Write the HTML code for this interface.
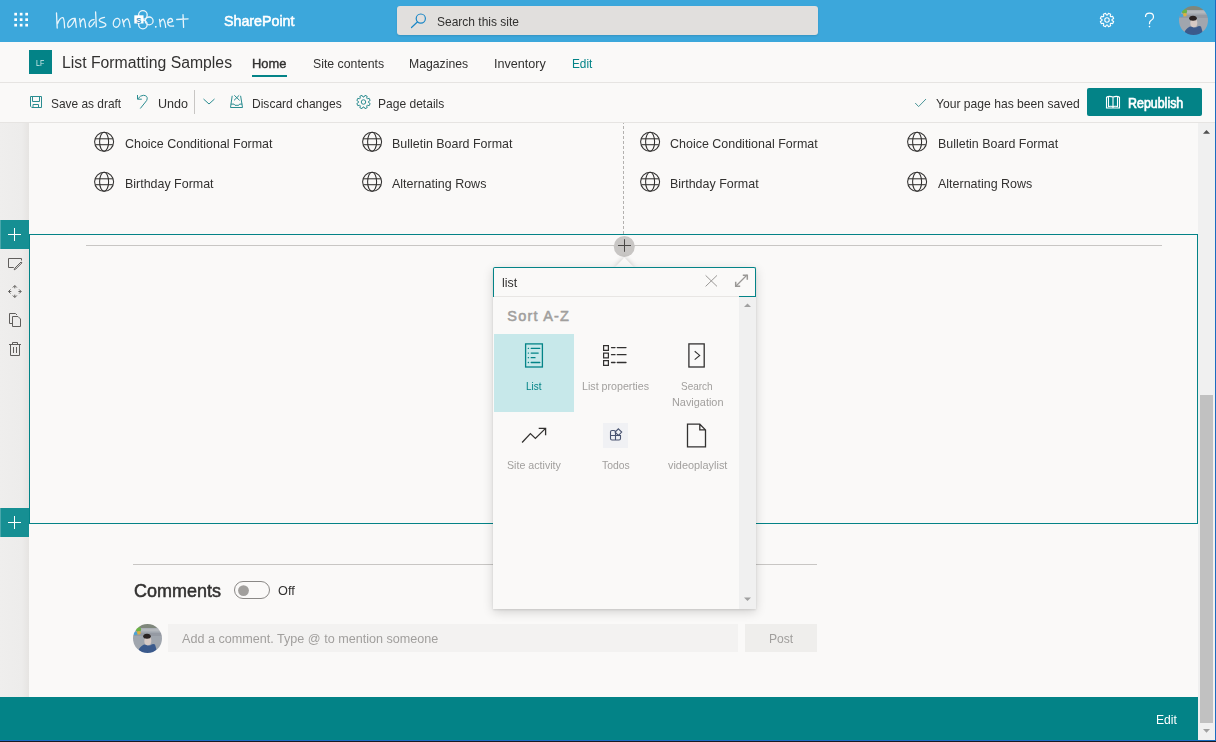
<!DOCTYPE html>
<html><head><meta charset="utf-8"><title>SharePoint</title>
<style>
html,body{margin:0;padding:0;width:1216px;height:742px;overflow:hidden;background:#faf9f8;}
.r{position:absolute;box-sizing:content-box;}
.t{position:absolute;white-space:nowrap;font-family:"Liberation Sans",sans-serif;transform-origin:0 0;}
svg{overflow:visible}
</style></head><body>
<div class="r" style="left:0;top:0;width:1216px;height:42px;background:#3ca7db"></div>
<svg class="r" style="left:0;top:0" width="40" height="42"><rect x="14.3" y="12.8" width="2.7" height="2.7" fill="#fff"/><rect x="14.3" y="18.3" width="2.7" height="2.7" fill="#fff"/><rect x="14.3" y="23.8" width="2.7" height="2.7" fill="#fff"/><rect x="19.8" y="12.8" width="2.7" height="2.7" fill="#fff"/><rect x="19.8" y="18.3" width="2.7" height="2.7" fill="#fff"/><rect x="19.8" y="23.8" width="2.7" height="2.7" fill="#fff"/><rect x="25.3" y="12.8" width="2.7" height="2.7" fill="#fff"/><rect x="25.3" y="18.3" width="2.7" height="2.7" fill="#fff"/><rect x="25.3" y="23.8" width="2.7" height="2.7" fill="#fff"/></svg>
<svg class="r" style="left:0;top:0" width="200" height="42"><g fill="none" stroke="#eaf5fb" stroke-width="1.3" stroke-linecap="round" stroke-linejoin="round"><path d="M56.5 13 L57.2 28 M57.5 23.7 Q60 17 63 17.6 Q64.3 19 64.6 27.8"/><path d="M75.2 18.4 Q70 18 67.8 23.5 Q67.5 27.5 69.2 27.2 Q72.5 25.8 75.2 18.4 L76.3 27.3"/><path d="M79.7 18.7 L80.6 26.6 M80.6 22.3 Q82 18.5 83.7 18.8 Q85 20 85.6 27.5"/><path d="M94 19.6 Q90 19.8 89 23.7 Q89 27.3 90.5 26.8 Q93 25.5 94.5 22 M95.6 12 L96.3 26.8"/><path d="M104.5 17.3 Q99.5 18 99.2 20.2 Q99.5 21.8 104 22.8 Q106.5 24 105.6 25.8 Q103.5 27.8 99.7 27.3"/><ellipse cx="116.6" cy="22.8" rx="3.2" ry="4.5" transform="rotate(15 116.6 22.8)"/><path d="M122.5 19.5 L124.2 26.7 M123.5 22.9 Q125.5 18.6 127.7 18.8 Q129.5 21 130.1 27.4"/><circle cx="142.9" cy="14.9" r="4.3"/><circle cx="149.2" cy="20.9" r="3.9"/><circle cx="142.9" cy="24.5" r="4.3"/><path d="M159.5 19.5 L160.5 26.7 M160.3 22 Q162 18.8 163.3 19.1 Q165 21 165.7 27.4"/><path d="M168.1 22.6 Q171 22.3 172.6 21.3 Q172.5 18.6 170.5 18.4 Q167.5 19 167.7 23 Q168 27 173.6 26"/><path d="M183 14.6 L183.6 27.4 M176.7 19.5 L188.1 18.8"/></g><circle cx="155.8" cy="26.8" r="0.9" fill="#fff"/><rect x="134.3" y="15.3" width="9.2" height="8.2" fill="#fff"/><text x="136.2" y="22.6" font-family="Liberation Sans" font-size="7.5" font-weight="700" fill="#3a8fc2">S</text></svg>
<span class="t" style="left:224.00px;top:14.00px;font-size:14.5px;line-height:14.5px;color:#fff;transform:scaleX(0.9822);-webkit-text-stroke:0.55px #fff;">SharePoint</span>
<div class="r" style="left:397px;top:6px;width:421px;height:29px;background:#e1dfdd;border-radius:3px;box-shadow:0 1px 2px rgba(0,0,0,.12)"></div>
<svg class="r" style="left:400px;top:5px" width="40" height="30"><circle cx="20.8" cy="13.6" r="4.6" fill="none" stroke="#1b87c6" stroke-width="1.2"/><line x1="17.6" y1="16.8" x2="11.5" y2="22.5" stroke="#1b87c6" stroke-width="1.2" stroke-linecap="round"/></svg>
<span class="t" style="left:437.00px;top:15.00px;font-size:13.5px;line-height:13.5px;color:#323130;transform:scaleX(0.8880);">Search this site</span>
<svg class="r" style="left:1090px;top:0" width="40" height="42"><polygon points="17.48,15.02 18.47,13.36 20.65,14.26 20.18,16.14 20.86,16.82 22.74,16.35 23.64,18.53 21.98,19.52 21.98,20.48 23.64,21.47 22.74,23.65 20.86,23.18 20.18,23.86 20.65,25.74 18.47,26.64 17.48,24.98 16.52,24.98 15.53,26.64 13.35,25.74 13.82,23.86 13.14,23.18 11.26,23.65 10.36,21.47 12.02,20.48 12.02,19.52 10.36,18.53 11.26,16.35 13.14,16.82 13.82,16.14 13.35,14.26 15.53,13.36 16.52,15.02" fill="none" stroke="#fff" stroke-width="1.1" stroke-linejoin="round"/><circle cx="17" cy="20" r="2.24" fill="none" stroke="#fff" stroke-width="1.1"/></svg>
<svg class="r" style="left:1135px;top:0" width="30" height="42"><path d="M10.5 17 Q10.5 13.2 14.5 13.2 Q18.5 13.2 18.5 17 Q18.5 19.3 16 20.5 Q14.5 21.3 14.5 23.5 L14.5 24.2" fill="none" stroke="#fff" stroke-width="1.2"/><circle cx="14.5" cy="26.6" r="0.8" fill="#fff"/></svg>
<svg class="r" style="left:1179.0px;top:6.0px" width="29.0" height="29.0"><defs><clipPath id="c1"><circle cx="14.5" cy="14.5" r="14.5"/></clipPath><filter id="f1"><feGaussianBlur stdDeviation="0.6"/></filter></defs><g clip-path="url(#c1)"><g transform="scale(1.0000)" filter="url(#f1)"><rect x="-2" y="-2" width="33" height="33" fill="#a0a6ae"/><rect x="-2" y="-2" width="33" height="6" fill="#7f877c"/><rect x="8" y="4.5" width="20" height="3" fill="#b4b8bd"/><rect x="-2" y="9" width="33" height="3" fill="#959aa3"/><ellipse cx="5.5" cy="5.5" rx="2.6" ry="2.3" fill="#6cb245"/><ellipse cx="5.8" cy="8.8" rx="2" ry="1.7" fill="#dcb040"/><ellipse cx="2.5" cy="9.5" rx="1.8" ry="1.8" fill="#4ba3d6"/><path d="M4 31 L6 25 Q9 20.5 12 20.5 L17 21.5 Q19.5 19 22 20.5 L25 31 Z" fill="#3a5a8c"/><ellipse cx="14.8" cy="17" rx="3.5" ry="4.4" fill="#d6c9c4"/><ellipse cx="14" cy="12.3" rx="3.8" ry="2.5" fill="#2b2321"/></g></g></svg>
<div class="r" style="left:0;top:42px;width:1216px;height:40px;background:#faf9f8"></div>
<div class="r" style="left:29px;top:50px;width:23px;height:24px;background:#038387"></div>
<span class="t" style="left:36.20px;top:58.00px;font-size:9.5px;line-height:9.5px;color:#cfe8e8;transform:scaleX(0.7377);">LF</span>
<span class="t" style="left:62.00px;top:55.00px;font-size:16px;line-height:16px;color:#323130;transform:scaleX(0.9856);">List Formatting Samples</span>
<span class="t" style="left:252.40px;top:57.00px;font-size:13.5px;line-height:13.5px;color:#323130;transform:scaleX(0.9544);-webkit-text-stroke:0.4px #323130;">Home</span>
<div class="r" style="left:252px;top:75px;width:35px;height:2px;background:#038387"></div>
<span class="t" style="left:312.50px;top:57.00px;font-size:13px;line-height:13px;color:#323130;transform:scaleX(0.9462);">Site contents</span>
<span class="t" style="left:409.30px;top:57.00px;font-size:13px;line-height:13px;color:#323130;transform:scaleX(0.9409);">Magazines</span>
<span class="t" style="left:494.00px;top:57.00px;font-size:13px;line-height:13px;color:#323130;transform:scaleX(0.9695);">Inventory</span>
<span class="t" style="left:571.60px;top:57.00px;font-size:13px;line-height:13px;color:#038387;transform:scaleX(0.9071);">Edit</span>
<div class="r" style="left:0;top:82px;width:1216px;height:1px;background:#e6e4e2"></div>
<div class="r" style="left:0;top:83px;width:1216px;height:39px;background:#faf9f8"></div>
<div class="r" style="left:0;top:122px;width:1216px;height:1px;background:#e6e4e2"></div>
<svg class="r" style="left:0;top:83px" width="460" height="39"><path d="M30.5 13.5 L41.5 13.5 L41.5 24.5 L31.8 24.5 L30.5 23.2 Z" fill="none" stroke="#2a8c90" stroke-width="1"/><path d="M32.5 14 L32.5 18.5 L39.5 18.5 L39.5 14" fill="none" stroke="#2a8c90" stroke-width="1"/><path d="M33 24.5 L33 21.5 L38.5 21.5 L38.5 24.5" fill="none" stroke="#2a8c90" stroke-width="1"/><path d="M137.5 12 L137.5 16.2 L141.8 16.2" fill="none" stroke="#2a8c90" stroke-width="1"/><path d="M137.9 15.8 Q140.5 12.2 143.5 12.3 Q147.5 12.6 147.2 15.8 Q147 17.5 145.5 19 L140.3 25.5" fill="none" stroke="#2a8c90" stroke-width="1"/><line x1="194.5" y1="7" x2="194.5" y2="31" stroke="#c8c6c4" stroke-width="1"/><path d="M203.5 16 L209 21 L214.5 16" fill="none" stroke="#2a8c90" stroke-width="1"/><path d="M232.2 12.8 L230.5 24.5 L242.5 24.5 L240.6 12.8 M230.8 21.1 L234 21.1 L235 22.3 L238.7 22.3 L239.6 21.1 L242.3 21.1" fill="none" stroke="#2a8c90" stroke-width="1"/><path d="M234.3 12.3 L239.6 17.4 M239.2 12.3 L234 17.4" stroke="#2a8c90" stroke-width="1"/><polygon points="363.98,14.02 364.97,12.36 367.15,13.26 366.68,15.14 367.36,15.82 369.24,15.35 370.14,17.53 368.48,18.52 368.48,19.48 370.14,20.47 369.24,22.65 367.36,22.18 366.68,22.86 367.15,24.74 364.97,25.64 363.98,23.98 363.02,23.98 362.03,25.64 359.85,24.74 360.32,22.86 359.64,22.18 357.76,22.65 356.86,20.47 358.52,19.48 358.52,18.52 356.86,17.53 357.76,15.35 359.64,15.82 360.32,15.14 359.85,13.26 362.03,12.36 363.02,14.02" fill="none" stroke="#2a8c90" stroke-width="1.0" stroke-linejoin="round"/><circle cx="363.5" cy="19" r="2.24" fill="none" stroke="#2a8c90" stroke-width="1.0"/></svg>
<span class="t" style="left:50.90px;top:97.00px;font-size:13.5px;line-height:13.5px;color:#323130;transform:scaleX(0.8816);">Save as draft</span>
<span class="t" style="left:157.50px;top:97.00px;font-size:13.5px;line-height:13.5px;color:#323130;transform:scaleX(0.9298);">Undo</span>
<span class="t" style="left:252.30px;top:97.00px;font-size:13.5px;line-height:13.5px;color:#323130;transform:scaleX(0.8919);">Discard changes</span>
<span class="t" style="left:378.20px;top:97.00px;font-size:13.5px;line-height:13.5px;color:#323130;transform:scaleX(0.8916);">Page details</span>
<svg class="r" style="left:900px;top:83px" width="40" height="39"><path d="M15.2 20 L18.6 23.6 L26 16" fill="none" stroke="#4a9598" stroke-width="1"/></svg>
<span class="t" style="left:935.60px;top:97.00px;font-size:13.5px;line-height:13.5px;color:#323130;transform:scaleX(0.8975);">Your page has been saved</span>
<div class="r" style="left:1087px;top:87.8px;width:115px;height:28.7px;background:#038387;border-radius:2px"></div>
<svg class="r" style="left:1100px;top:88px" width="25" height="29"><path d="M6.5 9 L6.5 20 L19.5 20 L19.5 9 M6.5 9 Q9.5 7.8 13 9 L13 20 M13 9 Q16.5 7.8 19.5 9 M8.5 9 L8.5 18.5 Q10.5 18 13 18.5 M17.5 9 L17.5 18.5 Q15.5 18 13 18.5" fill="none" stroke="#fff" stroke-width="1.1"/></svg>
<span class="t" style="left:1128.00px;top:96.00px;font-size:14px;line-height:14px;color:#fff;transform:scaleX(0.8876);-webkit-text-stroke:0.7px #fff;">Republish</span>
<div class="r" style="left:0;top:123px;width:29px;height:574px;background:linear-gradient(90deg,#efeeed 0,#edeceb 75%,#e6e4e2 100%)"></div>
<div class="r" style="left:29px;top:123px;width:1169px;height:574px;background:#faf9f8"></div>
<svg class="r" style="left:0;top:0" width="1216" height="200"><g transform="translate(94,132)" fill="none" stroke="#323130" stroke-width="1.05"><circle cx="10.1" cy="9.8" r="9.5"/><ellipse cx="10.1" cy="9.8" rx="4.5" ry="9.5"/><line x1="1.4" y1="6.8" x2="18.8" y2="6.8"/><line x1="1.4" y1="12.7" x2="18.8" y2="12.7"/></g><g transform="translate(94,172)" fill="none" stroke="#323130" stroke-width="1.05"><circle cx="10.1" cy="9.8" r="9.5"/><ellipse cx="10.1" cy="9.8" rx="4.5" ry="9.5"/><line x1="1.4" y1="6.8" x2="18.8" y2="6.8"/><line x1="1.4" y1="12.7" x2="18.8" y2="12.7"/></g><g transform="translate(362,132)" fill="none" stroke="#323130" stroke-width="1.05"><circle cx="10.1" cy="9.8" r="9.5"/><ellipse cx="10.1" cy="9.8" rx="4.5" ry="9.5"/><line x1="1.4" y1="6.8" x2="18.8" y2="6.8"/><line x1="1.4" y1="12.7" x2="18.8" y2="12.7"/></g><g transform="translate(362,172)" fill="none" stroke="#323130" stroke-width="1.05"><circle cx="10.1" cy="9.8" r="9.5"/><ellipse cx="10.1" cy="9.8" rx="4.5" ry="9.5"/><line x1="1.4" y1="6.8" x2="18.8" y2="6.8"/><line x1="1.4" y1="12.7" x2="18.8" y2="12.7"/></g><g transform="translate(640,132)" fill="none" stroke="#323130" stroke-width="1.05"><circle cx="10.1" cy="9.8" r="9.5"/><ellipse cx="10.1" cy="9.8" rx="4.5" ry="9.5"/><line x1="1.4" y1="6.8" x2="18.8" y2="6.8"/><line x1="1.4" y1="12.7" x2="18.8" y2="12.7"/></g><g transform="translate(640,172)" fill="none" stroke="#323130" stroke-width="1.05"><circle cx="10.1" cy="9.8" r="9.5"/><ellipse cx="10.1" cy="9.8" rx="4.5" ry="9.5"/><line x1="1.4" y1="6.8" x2="18.8" y2="6.8"/><line x1="1.4" y1="12.7" x2="18.8" y2="12.7"/></g><g transform="translate(907,132)" fill="none" stroke="#323130" stroke-width="1.05"><circle cx="10.1" cy="9.8" r="9.5"/><ellipse cx="10.1" cy="9.8" rx="4.5" ry="9.5"/><line x1="1.4" y1="6.8" x2="18.8" y2="6.8"/><line x1="1.4" y1="12.7" x2="18.8" y2="12.7"/></g><g transform="translate(907,172)" fill="none" stroke="#323130" stroke-width="1.05"><circle cx="10.1" cy="9.8" r="9.5"/><ellipse cx="10.1" cy="9.8" rx="4.5" ry="9.5"/><line x1="1.4" y1="6.8" x2="18.8" y2="6.8"/><line x1="1.4" y1="12.7" x2="18.8" y2="12.7"/></g></svg>
<span class="t" style="left:125.00px;top:137.00px;font-size:13.5px;line-height:13.5px;color:#323130;transform:scaleX(0.9228);">Choice Conditional Format</span>
<span class="t" style="left:125.00px;top:177.00px;font-size:13.5px;line-height:13.5px;color:#323130;transform:scaleX(0.9218);">Birthday Format</span>
<span class="t" style="left:392.00px;top:137.00px;font-size:13.5px;line-height:13.5px;color:#323130;transform:scaleX(0.9223);">Bulletin Board Format</span>
<span class="t" style="left:392.00px;top:177.00px;font-size:13.5px;line-height:13.5px;color:#323130;transform:scaleX(0.9249);">Alternating Rows</span>
<span class="t" style="left:670.00px;top:137.00px;font-size:13.5px;line-height:13.5px;color:#323130;transform:scaleX(0.9240);">Choice Conditional Format</span>
<span class="t" style="left:670.00px;top:177.00px;font-size:13.5px;line-height:13.5px;color:#323130;transform:scaleX(0.9228);">Birthday Format</span>
<span class="t" style="left:938.00px;top:137.00px;font-size:13.5px;line-height:13.5px;color:#323130;transform:scaleX(0.9208);">Bulletin Board Format</span>
<span class="t" style="left:938.00px;top:177.00px;font-size:13.5px;line-height:13.5px;color:#323130;transform:scaleX(0.9240);">Alternating Rows</span>
<svg class="r" style="left:600px;top:120px" width="50" height="120"><line x1="23.5" y1="6" x2="23.5" y2="114" stroke="#b3b1af" stroke-width="1" stroke-dasharray="3 2"/><rect x="23" y="3" width="1" height="1" fill="#b3b1af"/></svg>
<div class="r" style="left:29px;top:234px;width:1167px;height:288px;border:1px solid #038387"></div>
<div class="r" style="left:86px;top:245px;width:1076px;height:1px;background:#c8c6c4"></div>
<div class="r" style="left:0;top:220px;width:29px;height:29px;background:linear-gradient(90deg,#4aa7ab 0,#4aa7ab 1px,#168f93 1.5px)"></div><svg class="r" style="left:0;top:220px" width="29" height="28"><path d="M8 14.5 L21 14.5 M14.5 8 L14.5 21" stroke="#fff" stroke-width="1"/></svg>
<div class="r" style="left:0;top:508px;width:29px;height:29px;background:linear-gradient(90deg,#4aa7ab 0,#4aa7ab 1px,#168f93 1.5px)"></div><svg class="r" style="left:0;top:508px" width="29" height="28"><path d="M8 14.5 L21 14.5 M14.5 8 L14.5 21" stroke="#fff" stroke-width="1"/></svg>
<svg class="r" style="left:0;top:250px" width="29" height="110" fill="none" stroke="#605e5c" stroke-width="1"><path d="M13.8 17.5 L8.5 17.5 L8.5 8.5 L21.5 8.5 L21.5 10.5"/><path d="M22 12.8 L15.8 19 L14.2 19.8 L14.8 18.2 L21 12 Z"/><path d="M12.8 37.5 L14.8 35.5 L16.8 37.5 M14.8 35.8 L14.8 38.3 M10.5 39.5 L8.5 41.5 L10.5 43.5 M8.8 41.5 L11.3 41.5 M19.2 39.5 L21.2 41.5 L19.2 43.5 M20.9 41.5 L18.4 41.5 M12.8 45.5 L14.8 47.5 L16.8 45.5 M14.8 47.2 L14.8 44.7"/><path d="M12 73.5 L9.5 73.5 L9.5 63.5 L15.5 63.5 L17 65"/><path d="M12.5 66.5 L18 66.5 L20.5 69 L20.5 76.5 L12.5 76.5 Z"/><path d="M9 94.5 L21 94.5 M12.5 94.5 L12.5 92.5 L17.5 92.5 L17.5 94.5 M10.5 94.5 L10.5 105.5 L19.5 105.5 L19.5 94.5 M13.5 97 L13.5 103 M16.5 97 L16.5 103"/></svg>
<svg class="r" style="left:600px;top:230px" width="50" height="40"><circle cx="24.3" cy="16.5" r="10.5" fill="#c8c6c4"/><path d="M18 15.5 L31 15.5 M24.5 9.2 L24.5 21.8" stroke="#4a4846" stroke-width="1"/></svg>
<div class="r" style="left:133px;top:564px;width:684px;height:1px;background:#c8c6c4"></div>
<span class="t" style="left:133.50px;top:583.00px;font-size:17.5px;line-height:17.5px;color:#323130;transform:scaleX(1.0269);-webkit-text-stroke:0.5px #323130;">Comments</span>
<div class="r" style="left:234px;top:581px;width:34px;height:16px;border:1px solid #8a8886;border-radius:9px"></div>
<svg class="r" style="left:230px;top:580px" width="30" height="20"><circle cx="13.5" cy="10.6" r="5.4" fill="#a19f9d"/></svg>
<span class="t" style="left:278.20px;top:584.00px;font-size:13px;line-height:13px;color:#323130;transform:scaleX(0.9790);">Off</span>
<svg class="r" style="left:133.0px;top:623.5px" width="29.0" height="29.0"><defs><clipPath id="c2"><circle cx="14.5" cy="14.5" r="14.5"/></clipPath><filter id="f2"><feGaussianBlur stdDeviation="0.6"/></filter></defs><g clip-path="url(#c2)"><g transform="scale(1.0000)" filter="url(#f2)"><rect x="-2" y="-2" width="33" height="33" fill="#a0a6ae"/><rect x="-2" y="-2" width="33" height="6" fill="#7f877c"/><rect x="8" y="4.5" width="20" height="3" fill="#b4b8bd"/><rect x="-2" y="9" width="33" height="3" fill="#959aa3"/><ellipse cx="5.5" cy="5.5" rx="2.6" ry="2.3" fill="#6cb245"/><ellipse cx="5.8" cy="8.8" rx="2" ry="1.7" fill="#dcb040"/><ellipse cx="2.5" cy="9.5" rx="1.8" ry="1.8" fill="#4ba3d6"/><path d="M4 31 L6 25 Q9 20.5 12 20.5 L17 21.5 Q19.5 19 22 20.5 L25 31 Z" fill="#3a5a8c"/><ellipse cx="14.8" cy="17" rx="3.5" ry="4.4" fill="#d6c9c4"/><ellipse cx="14" cy="12.3" rx="3.8" ry="2.5" fill="#2b2321"/></g></g></svg>
<div class="r" style="left:168px;top:624px;width:570px;height:28px;background:#f3f2f1"></div>
<span class="t" style="left:182.20px;top:632.00px;font-size:13.5px;line-height:13.5px;color:#a19f9d;transform:scaleX(0.9334);">Add a comment. Type @ to mention someone</span>
<div class="r" style="left:745px;top:624px;width:72px;height:28px;background:#efeeec"></div>
<span class="t" style="left:769.00px;top:632.00px;font-size:13.5px;line-height:13.5px;color:#a19f9d;transform:scaleX(0.8963);">Post</span>
<svg class="r" style="left:600px;top:250px;filter:drop-shadow(0 0 2.5px rgba(0,0,0,.22))" width="50" height="20"><path d="M14.5 17.5 L24.4 7.6 L34.3 17.5 Z" fill="#faf9f8"/></svg>
<div class="r" style="left:493px;top:267px;width:263px;height:342px;background:#faf9f8;box-shadow:0 3.2px 10px rgba(0,0,0,.16),0 0.6px 2px rgba(0,0,0,.1)"></div>
<div class="r" style="left:493px;top:267px;width:261px;height:29px;border:1px solid #038387;border-bottom:0;border-radius:2px 2px 0 0;background:#faf9f8"></div>
<div class="r" style="left:494px;top:295.5px;width:245px;height:1.5px;background:#e8e6e4"></div>
<div class="r" style="left:739px;top:295.6px;width:17px;height:1.2px;background:#038387"></div>
<span class="t" style="left:501.60px;top:276.00px;font-size:13.5px;line-height:13.5px;color:#323130;transform:scaleX(0.9229);">list</span>
<svg class="r" style="left:700px;top:270px" width="56" height="24" fill="none" stroke="#9a9896" stroke-width="1"><path d="M5.6 5.4 L17 16.4 M17 5.4 L5.6 16.4"/><path d="M36 16 L47 5" stroke-width="1.2"/><path d="M42.8 5.2 L47.3 5.2 L47.3 9.7 M35.7 11.8 L35.7 16.3 L40.2 16.3" stroke-width="1.5"/></svg>
<div class="r" style="left:739px;top:297px;width:17px;height:312px;background:#f0f0f0"></div>
<svg class="r" style="left:739px;top:297px" width="17" height="312"><path d="M5 10 L8.5 6.5 L12 10 Z" fill="#a0a0a0"/><path d="M5 300.5 L8.5 304 L12 300.5 Z" fill="#a0a0a0"/></svg>
<span class="t" style="left:507.30px;top:309.00px;font-size:14.5px;line-height:14.5px;color:#a19f9d;transform:scaleX(1.0000);-webkit-text-stroke:0.55px #a19f9d;letter-spacing:1.212px;">Sort A-Z</span>
<div class="r" style="left:494px;top:334px;width:80px;height:78px;background:#c7e8ea"></div>
<svg class="r" style="left:490px;top:330px" width="250" height="130" fill="none" stroke-width="1.2"><rect x="35.6" y="13.9" width="16.8" height="23.1" stroke="#038387" stroke-width="1.3"/><path d="M38.3 18.3 h0.2 M38.3 23.1 h0.2 M38.3 27.7 h0.2 M38.3 32.5 h0.2" stroke="#038387" stroke-width="1.3" stroke-linecap="round"/><path d="M41.2 18.3 H49.8 M41.2 23.1 H48.2 M41.2 27.7 H45 M41.2 32.5 H49.8" stroke="#038387" stroke-width="1.3" stroke-linecap="round"/><path d="M113.6 15.6 h4.8 v4.8 h-4.8 z M113.6 23.1 h4.8 v4.8 h-4.8 z M113.6 30.6 h4.8 v4.8 h-4.8 z" stroke="#323130" stroke-width="1.2"/><path d="M121.5 17.6 H125 M127.3 17.6 H136 M121.5 24.7 H125 M127.3 24.7 H136 M121.5 32.5 H125 M127.3 32.5 H136" stroke="#323130" stroke-width="1.3" stroke-linecap="round"/><rect x="198.9" y="13.9" width="15.3" height="23.1" stroke="#323130" stroke-width="1.3"/><path d="M204.7 21.3 L209.7 25.4 L204.7 29.6" stroke="#323130" stroke-width="1.1"/><path d="M32.1 112.5 L40.4 103.6 L45.4 108.4 L55.3 98.6 M48.7 98.3 H55.6 V105.2" stroke="#323130" stroke-width="1.3"/></svg>
<div class="r" style="left:603px;top:423px;width:25px;height:25px;background:#f0f1f4"></div>
<svg class="r" style="left:600px;top:420px" width="120" height="32" fill="none" stroke="#4a5470" stroke-width="1.1"><path d="M10.5 15.5 H20.5 V18.5 Q20.5 20 19 20 H12 Q10.5 20 10.5 18.5 V12 Q10.5 10.5 12 10.5 H14 Q15.5 10.5 15.5 12 V20"/><path d="M18.4 8.8 L21.7 12.1 L18.4 15.4 L15.1 12.1 Z"/><path d="M87.5 4.2 L99.8 4.2 L105.5 9.9 L105.5 26.8 L87.5 26.8 Z M99.8 4.2 L99.8 9.9 L105.5 9.9" stroke="#323130" stroke-width="1.3"/></svg>
<span class="t" style="left:526.00px;top:381.00px;font-size:11.5px;line-height:11.5px;color:#038387;transform:scaleX(0.8640);">List</span>
<span class="t" style="left:582.00px;top:381.00px;font-size:11.5px;line-height:11.5px;color:#a19f9d;transform:scaleX(0.9277);">List properties</span>
<span class="t" style="left:681.40px;top:381.00px;font-size:11.5px;line-height:11.5px;color:#a19f9d;transform:scaleX(0.8668);">Search</span>
<span class="t" style="left:671.60px;top:397.00px;font-size:11.5px;line-height:11.5px;color:#a19f9d;transform:scaleX(0.9469);">Navigation</span>
<span class="t" style="left:506.70px;top:460.00px;font-size:11.5px;line-height:11.5px;color:#a19f9d;transform:scaleX(0.9263);">Site activity</span>
<span class="t" style="left:601.70px;top:460.00px;font-size:11.5px;line-height:11.5px;color:#a19f9d;transform:scaleX(0.9021);">Todos</span>
<span class="t" style="left:667.60px;top:460.00px;font-size:11.5px;line-height:11.5px;color:#a19f9d;transform:scaleX(0.9477);">videoplaylist</span>
<div class="r" style="left:0;top:697px;width:1198px;height:43px;background:#038387"></div>
<span class="t" style="left:1156.00px;top:713.00px;font-size:13.5px;line-height:13.5px;color:#fff;transform:scaleX(0.8992);">Edit</span>
<div class="r" style="left:1198px;top:123px;width:17px;height:617px;background:#f0f0f0"></div>
<div class="r" style="left:1200px;top:395px;width:13px;height:328px;background:#c1c1c1"></div>
<svg class="r" style="left:1198px;top:123px" width="17" height="617"><path d="M5 10.8 L8.5 7 L12 10.8 Z" fill="#505050"/><path d="M5 606 L8.5 609.8 L12 606 Z" fill="#a0a0a0"/></svg>
<div class="r" style="left:1215px;top:0;width:1px;height:741px;background:#1a6dc0"></div>
<div class="r" style="left:0;top:740px;width:1216px;height:1px;background:#1a6dc0"></div>
<div class="r" style="left:0;top:741px;width:1216px;height:1px;background:#1a1a22"></div>
</body></html>
